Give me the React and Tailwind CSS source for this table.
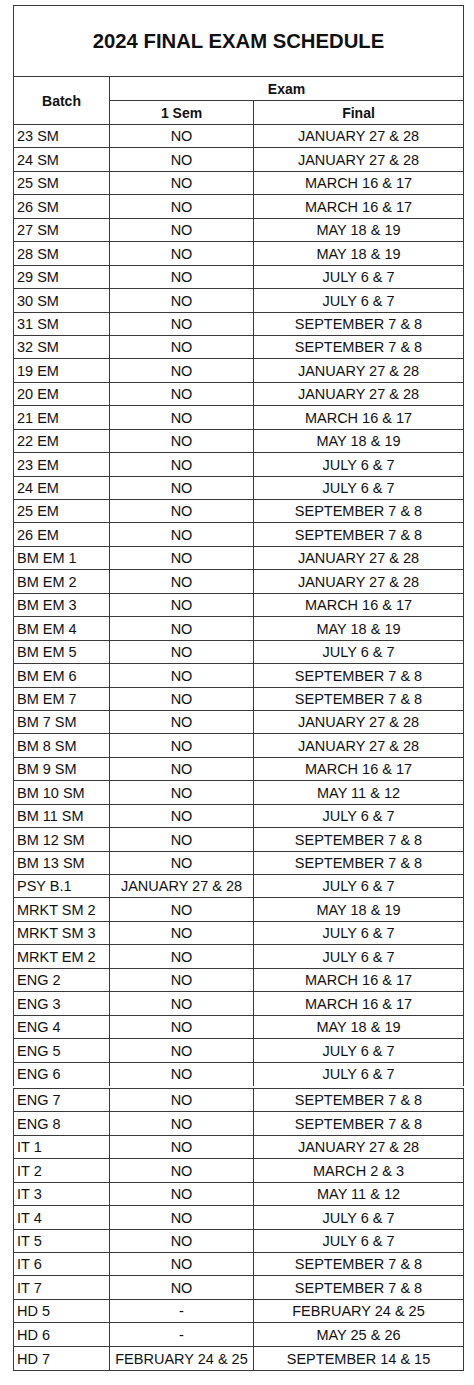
import React from "react";

const upper = [
  ["23 SM", "NO", "JANUARY 27 & 28"],
  ["24 SM", "NO", "JANUARY 27 & 28"],
  ["25 SM", "NO", "MARCH 16 & 17"],
  ["26 SM", "NO", "MARCH 16 & 17"],
  ["27 SM", "NO", "MAY 18 & 19"],
  ["28 SM", "NO", "MAY 18 & 19"],
  ["29 SM", "NO", "JULY 6 & 7"],
  ["30 SM", "NO", "JULY 6 & 7"],
  ["31 SM", "NO", "SEPTEMBER 7 & 8"],
  ["32 SM", "NO", "SEPTEMBER 7 & 8"],
  ["19 EM", "NO", "JANUARY 27 & 28"],
  ["20 EM", "NO", "JANUARY 27 & 28"],
  ["21 EM", "NO", "MARCH 16 & 17"],
  ["22 EM", "NO", "MAY 18 & 19"],
  ["23 EM", "NO", "JULY 6 & 7"],
  ["24 EM", "NO", "JULY 6 & 7"],
  ["25 EM", "NO", "SEPTEMBER 7 & 8"],
  ["26 EM", "NO", "SEPTEMBER 7 & 8"],
  ["BM EM 1", "NO", "JANUARY 27 & 28"],
  ["BM EM 2", "NO", "JANUARY 27 & 28"],
  ["BM EM 3", "NO", "MARCH 16 & 17"],
  ["BM EM 4", "NO", "MAY 18 & 19"],
  ["BM EM 5", "NO", "JULY 6 & 7"],
  ["BM EM 6", "NO", "SEPTEMBER 7 & 8"],
  ["BM EM 7", "NO", "SEPTEMBER 7 & 8"],
  ["BM 7 SM", "NO", "JANUARY 27 & 28"],
  ["BM 8 SM", "NO", "JANUARY 27 & 28"],
  ["BM 9 SM", "NO", "MARCH 16 & 17"],
  ["BM 10 SM", "NO", "MAY 11 & 12"],
  ["BM 11 SM", "NO", "JULY 6 & 7"],
  ["BM 12 SM", "NO", "SEPTEMBER 7 & 8"],
  ["BM 13 SM", "NO", "SEPTEMBER 7 & 8"],
  ["PSY B.1", "JANUARY 27 & 28", "JULY 6 & 7"],
  ["MRKT SM 2", "NO", "MAY 18 & 19"],
  ["MRKT SM 3", "NO", "JULY 6 & 7"],
  ["MRKT EM 2", "NO", "JULY 6 & 7"],
  ["ENG 2", "NO", "MARCH 16 & 17"],
  ["ENG 3", "NO", "MARCH 16 & 17"],
  ["ENG 4", "NO", "MAY 18 & 19"],
  ["ENG 5", "NO", "JULY 6 & 7"],
  ["ENG 6", "NO", "JULY 6 & 7"],
];

const lower = [
  ["ENG 7", "NO", "SEPTEMBER 7 & 8"],
  ["ENG 8", "NO", "SEPTEMBER 7 & 8"],
  ["IT 1", "NO", "JANUARY 27 & 28"],
  ["IT 2", "NO", "MARCH 2 & 3"],
  ["IT 3", "NO", "MAY 11 & 12"],
  ["IT 4", "NO", "JULY 6 & 7"],
  ["IT 5", "NO", "JULY 6 & 7"],
  ["IT 6", "NO", "SEPTEMBER 7 & 8"],
  ["IT 7", "NO", "SEPTEMBER 7 & 8"],
  ["HD 5", "-", "FEBRUARY 24 & 25"],
  ["HD 6", "-", "MAY 25 & 26"],
  ["HD 7", "FEBRUARY 24 & 25", "SEPTEMBER 14 & 15"],
];

function Row({ r, last }) {
  return (
    <div
      className={
        "grid grid-cols-[96px_144px_1fr] h-[23.45px] border-[#3a3a3a] " +
        (last ? "" : "border-b")
      }
    >
      <div className="border-r border-[#3a3a3a] pl-[3px] pt-[1px] flex items-center whitespace-nowrap">
        {r[0]}
      </div>
      <div className="border-r border-[#3a3a3a] pt-[1px] flex items-center justify-center whitespace-nowrap">
        {r[1]}
      </div>
      <div className="pt-[1px] flex items-center justify-center whitespace-nowrap">
        {r[2]}
      </div>
    </div>
  );
}

export default function App() {
  return (
    <div
      className="w-[474px] h-[1385px] bg-white text-[#111] text-[14.5px] leading-none pt-[5px] pl-[13px]"
      style={{ fontFamily: '"Liberation Sans", Arial, sans-serif' }}
    >
      <div className="w-[451px] border border-b-0 border-[#3a3a3a]">
        <div className="h-[71px] border-b border-[#3a3a3a] flex items-center justify-center font-bold text-[20.3px] pt-[1px]">
          2024 FINAL EXAM SCHEDULE
        </div>
        <div className="grid grid-cols-[96px_144px_1fr] grid-rows-[24px_23px] border-b border-[#3a3a3a] font-bold text-[14px]">
          <div className="row-span-2 border-r border-[#3a3a3a] flex items-center justify-center pt-[1px]">
            Batch
          </div>
          <div className="col-span-2 border-b border-[#3a3a3a] flex items-center justify-center">
            Exam
          </div>
          <div className="border-r border-[#3a3a3a] flex items-center justify-center pt-[1px]">
            1 Sem
          </div>
          <div className="flex items-center justify-center pt-[1px]">Final</div>
        </div>
        {upper.map((r, i) => (
          <Row key={i} r={r} last={i === upper.length - 1} />
        ))}
      </div>
      <div className="w-[451px] mt-[2px] border border-[#3a3a3a]">
        {lower.map((r, i) => (
          <Row key={i} r={r} last={i === lower.length - 1} />
        ))}
      </div>
    </div>
  );
}
